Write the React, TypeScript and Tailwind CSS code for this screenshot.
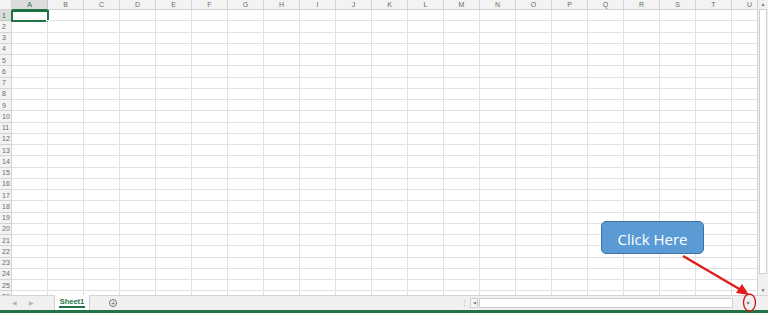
import React from 'react'

const COLS = 'ABCDEFGHIJKLMNOPQRSTU'.split('')
const ROWS = Array.from({ length: 26 }, (_, i) => i + 1)

function ColumnHeaders() {
  return (
    <div className="flex h-[10px] shrink-0">
      <div className="w-[12px] shrink-0 bg-[#f3f3f3] border-r border-b border-[#d4d4d4]" />
      {COLS.map(c => (
        <div
          key={c}
          className={`w-[36px] shrink-0 flex items-center justify-center text-[7px] leading-none border-r border-b ${
            c === 'A'
              ? 'bg-[#dcdcdc] text-[#217346] border-r-[#c6c6c6] border-b-[#217346]'
              : 'bg-[#f3f3f3] text-[#6a6a6a] border-[#d4d4d4]'
          }`}
        >
          {c}
        </div>
      ))}
    </div>
  )
}

function GridRow({ n }: { n: number }) {
  const active = n === 1
  return (
    <div className="flex h-[11.25px] shrink-0">
      <div
        className={`w-[12px] shrink-0 flex items-center pl-[2px] text-[7px] leading-none border-r border-b ${
          active
            ? 'bg-[#dcdcdc] text-[#217346] border-r-[#217346] border-b-[#c6c6c6]'
            : 'bg-[#f3f3f3] text-[#6a6a6a] border-[#d4d4d4]'
        }`}
      >
        {n}
      </div>
      {COLS.map(c => (
        <div key={c} className="w-[36px] shrink-0 border-r border-b border-[#e1e1e1] bg-white" />
      ))}
    </div>
  )
}

function VerticalScrollbar() {
  return (
    <div className="w-[11px] shrink-0 flex flex-col bg-[#f0f0f0] border-l border-[#d4d4d4]">
      <div className="h-[9px] flex items-center justify-center text-[5px] text-[#777]">▲</div>
      <div className="mx-[1px] h-[265px] bg-white border border-[#cfcfcf]" />
      <div className="flex-1" />
      <div className="h-[9px] flex items-center justify-center text-[5px] text-[#777]">▼</div>
    </div>
  )
}

function SheetTabs() {
  return (
    <div className="h-[15px] shrink-0 flex items-stretch bg-[#f0f0f0] border-t border-[#d4d4d4]">
      <div className="w-[54px] shrink-0 flex items-center gap-[12px] pl-[12px] text-[6px] text-[#b5b5b5]">
        <span>◀</span>
        <span>▶</span>
      </div>
      <div className="w-[36px] shrink-0 -mt-px bg-white border-x border-[#cfcfcf] flex flex-col items-center justify-center">
        <span className="text-[7.5px] font-bold text-[#217346] leading-none">Sheet1</span>
        <div className="w-[26px] h-[1.5px] bg-[#217346] mt-[1px]" />
      </div>
      <div className="w-[46px] shrink-0 flex items-center justify-center">
        <div className="w-[8px] h-[8px] rounded-full border border-[#777] flex items-center justify-center text-[7px] leading-none text-[#555]">
          +
        </div>
      </div>
      <div className="flex-1" />
      <div className="w-[8px] shrink-0 flex items-center justify-center text-[7px] text-[#aaa]">⋮</div>
      {/* horizontal scrollbar */}
      <div className="w-[289px] shrink-0 flex items-center pl-[2px] pr-[4px]">
        <div className="w-[8px] h-[10px] shrink-0 border border-[#cfcfcf] bg-[#f7f7f7] flex items-center justify-center text-[4px] text-[#777]">◀</div>
        <div className="w-[1px] shrink-0" />
        <div className="flex-1 h-[10px] bg-white border border-[#cfcfcf]" />
        <div className="w-[11px] shrink-0" />
        <div className="w-[9px] h-[10px] shrink-0 flex items-center justify-center text-[4px] text-[#777]">▶</div>
      </div>
      <div className="w-[11px] shrink-0 bg-[#f0f0f0]" />
    </div>
  )
}

function Callout() {
  return (
    <>
      <div className="absolute left-[601px] top-[221px] w-[103px] h-[33px] rounded-[5px] bg-[#5b9bd5] border border-[#41719c] flex items-center justify-center pt-[3px]">
        <span className="text-[15px] text-white leading-none" style={{ fontFamily: '"Open Sans", "Liberation Sans", sans-serif' }}>
          Click Here
        </span>
      </div>
      <svg className="absolute left-0 top-0" width="768" height="313" viewBox="0 0 768 313">
        <line x1="683" y1="256" x2="741" y2="290" stroke="#e31b1b" strokeWidth="2.4" />
        <polygon points="749,295 736,293 742,284" fill="#e31b1b" />
        <ellipse cx="749.5" cy="302.5" rx="6" ry="8.5" fill="none" stroke="#d01414" strokeWidth="1.3" />
      </svg>
    </>
  )
}

export default function App() {
  return (
    <div
      className="relative w-[768px] h-[313px] overflow-hidden bg-white flex flex-col"
      style={{ fontFamily: '"Liberation Sans", Arial, sans-serif' }}
    >
      <div className="h-[295px] flex shrink-0">
        <div className="relative w-[757px] shrink-0 overflow-hidden flex flex-col">
          <ColumnHeaders />
          {ROWS.map(n => (
            <GridRow key={n} n={n} />
          ))}
          {/* active cell A1 */}
          <div className="absolute left-[11px] top-[9.5px] w-[38px] h-[12.5px] border-2 border-[#217346]" />
          <div className="absolute left-[46px] top-[19.5px] w-[3px] h-[3px] bg-[#217346] border border-white" />
        </div>
        <VerticalScrollbar />
      </div>
      <SheetTabs />
      <div className="h-[3px] shrink-0 bg-[#217346]" />
      <Callout />
    </div>
  )
}
